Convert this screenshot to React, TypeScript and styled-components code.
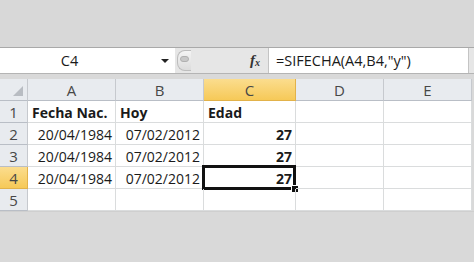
import React from 'react';
import styled, { createGlobalStyle } from 'styled-components';

const GlobalStyle = createGlobalStyle`
  html, body {
    margin: 0;
    padding: 0;
    background: #d9d9d9;
  }
  body {
    font-family: 'Open Sans', 'Liberation Sans', sans-serif;
    color: #1a1a1a;
  }
`;

const Window = styled.div`
  width: 474px;
  height: 262px;
  display: flex;
  flex-direction: column;
  background: #d9d9d9;
  overflow: hidden;
`;

const Ribbon = styled.div`
  height: 47px;
  background: #d8d8d8;
  border-bottom: 1px solid #a9a9a9;
`;

const FormulaBar = styled.div`
  height: 25px;
  display: flex;
  align-items: stretch;
  background: #e6e6e6;
  border-bottom: 1px solid #b4b4b4;
`;

const NameBox = styled.div`
  width: 175px;
  background: #fff;
  display: flex;
  align-items: center;
  font-size: 14.5px;
`;

const NameText = styled.span`
  flex: 1;
  text-align: center;
  padding-right: 22px;
`;

const DropArrow = styled.span`
  width: 0;
  height: 0;
  border-left: 4px solid transparent;
  border-right: 4px solid transparent;
  border-top: 4px solid #222;
  margin-right: 6px;
`;

const Splitter = styled.div`
  width: 14px;
  margin: 2px 0 2px 2px;
  border-radius: 8px 0 0 8px;
  border: 1px solid #bdbdbd;
  border-right: none;
  background: linear-gradient(#f4f4f4, #dcdcdc);
  display: flex;
  justify-content: center;
  padding-top: 5px;
  box-sizing: border-box;
`;

const Grip = styled.span`
  width: 7px;
  height: 4px;
  border-radius: 3px;
  background: #c8c8c8;
  border: 1px solid #b0b0b0;
`;

const FxZone = styled.div`
  width: 78px;
  display: flex;
  align-items: center;
  justify-content: flex-end;
  padding-right: 8px;
  box-sizing: border-box;
  border-right: 1px solid #c4c4c4;
`;

const Fx = styled.span`
  font-family: 'Liberation Serif', serif;
  font-style: italic;
  font-weight: bold;
  font-size: 15px;
  color: #333;
  sub {
    font-size: 10px;
    vertical-align: -1px;
  }
`;

const FormulaInput = styled.div`
  width: 200px;
  background: #fff;
  display: flex;
  align-items: center;
  padding-left: 7px;
  box-sizing: border-box;
  font-size: 14.5px;
  border-right: 1px solid #c4c4c4;
`;

const Gap = styled.div`
  height: 5px;
`;

const Sheet = styled.div`
  display: grid;
  grid-template-columns: 28px 88px 88px 92px 88px 88px;
  grid-auto-rows: 22px;
  width: 472px;
  background: #fff;
  font-size: 14px;
`;

const Corner = styled.div`
  background: #e8ebef;
  border-right: 1px solid #c6c9ce;
  border-bottom: 1px solid #b9bec6;
  display: flex;
  align-items: flex-end;
  justify-content: flex-end;
  padding: 0 4px 4px 0;
`;

const ColHead = styled.div<{ $active?: boolean }>`
  background: ${(p) =>
    p.$active ? 'linear-gradient(#fbdd8e, #f6c958)' : '#e8ebef'};
  border-right: 1px solid ${(p) => (p.$active ? '#e2b24a' : '#c6c9ce')};
  border-bottom: 1px solid ${(p) => (p.$active ? '#e2b24a' : '#b9bec6')};
  color: #474747;
  font-size: 15px;
  display: flex;
  align-items: center;
  justify-content: center;
`;

const RowHead = styled(ColHead)`
  padding-top: 1px;
`;

const Cell = styled.div<{ $right?: boolean; $bold?: boolean }>`
  position: relative;
  border-right: 1px solid #dadcdd;
  border-bottom: 1px solid #dadcdd;
  display: flex;
  align-items: center;
  justify-content: ${(p) => (p.$right ? 'flex-end' : 'flex-start')};
  padding: 2px 3px 0 4px;
  font-weight: ${(p) => (p.$bold ? 700 : 400)};
  white-space: nowrap;
`;

const Selection = styled.div`
  position: absolute;
  top: -2px;
  left: -2px;
  right: -1px;
  bottom: -2px;
  border: 3px solid #111;
  pointer-events: none;
`;

const Handle = styled.span`
  position: absolute;
  right: -6px;
  bottom: -6px;
  width: 6px;
  height: 6px;
  background: #111;
  border: 1px solid #fff;
`;

const Below = styled.div`
  flex: 1;
  background: #d9d9d9;
  border-top: 1px solid #cfcfcf;
`;

type Row = { n: number; a: string; b: string; c: string; header?: boolean };

const rows: Row[] = [
  { n: 1, a: 'Fecha Nac.', b: 'Hoy', c: 'Edad', header: true },
  { n: 2, a: '20/04/1984', b: '07/02/2012', c: '27' },
  { n: 3, a: '20/04/1984', b: '07/02/2012', c: '27' },
  { n: 4, a: '20/04/1984', b: '07/02/2012', c: '27' },
  { n: 5, a: '', b: '', c: '' },
];

const activeRow = 4;

export default function App() {
  return (
    <Window>
      <GlobalStyle />
      <Ribbon />
      <FormulaBar>
        <NameBox>
          <NameText>C4</NameText>
          <DropArrow />
        </NameBox>
        <Splitter>
          <Grip />
        </Splitter>
        <FxZone>
          <Fx>
            f<sub>x</sub>
          </Fx>
        </FxZone>
        <FormulaInput>=SIFECHA(A4,B4,"y")</FormulaInput>
      </FormulaBar>
      <Gap />
      <Sheet>
        <Corner>
          <svg width="10" height="10" viewBox="0 0 10 10">
            <polygon points="10,0 10,10 0,10" fill="#b8bcc2" />
          </svg>
        </Corner>
        {['A', 'B', 'C', 'D', 'E'].map((l) => (
          <ColHead key={l} $active={l === 'C'}>
            {l}
          </ColHead>
        ))}
        {rows.map((r) => (
          <React.Fragment key={r.n}>
            <RowHead $active={r.n === activeRow}>{r.n}</RowHead>
            <Cell $bold={r.header} $right={!r.header}>
              {r.a}
            </Cell>
            <Cell $bold={r.header} $right={!r.header}>
              {r.b}
            </Cell>
            <Cell $bold={r.header || r.c !== ''} $right={!r.header}>
              {r.c}
              {r.n === activeRow && (
                <Selection>
                  <Handle />
                </Selection>
              )}
            </Cell>
            <Cell />
            <Cell />
          </React.Fragment>
        ))}
      </Sheet>
      <Below />
    </Window>
  );
}
